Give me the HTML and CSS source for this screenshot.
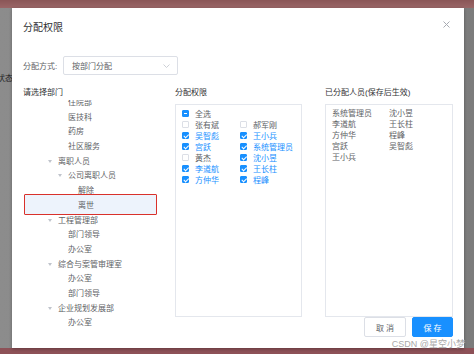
FILE: index.html
```html
<!DOCTYPE html>
<html lang="zh-CN">

<head>
    <meta charset="utf-8">
    <meta name="viewport" content="width=device-width, initial-scale=1.0">
    <title>分配权限</title>

    <link rel="stylesheet" href="styles.css">
</head>

<body>

    <div class="page">
        <div class="page-top"></div>
        <div class="page-body"><span class="page-text">状态</span></div>
        <div class="page-bottom"></div>
    </div>

    <div class="dialog">
        <div class="dialog-header">
            <span class="dialog-title">分配权限</span>
            <button class="dialog-close">
                <svg width="7" height="7" viewBox="0 0 7 7"><path d="M0.5 0.5L6.5 6.5M6.5 0.5L0.5 6.5" stroke="#a8abb2" stroke-width="1" fill="none"/></svg>
            </button>
        </div>

        <div class="form-row">
            <label>分配方式:</label>
            <div class="select">
                <span>按部门分配</span>
                <svg class="chevron" width="7" height="4" viewBox="0 0 7 4"><path d="M0.5 0.5L3.5 3.5L6.5 0.5" stroke="#c0c4cc" stroke-width="0.8" fill="none"/></svg>
            </div>
        </div>

        <div class="columns">
            <!--部门-->
            <div class="col-dept">
                <div class="col-title">请选择部门</div>
                <div class="tree">
                    <ul class="tree-list">
                        <li class="l2">住院部</li>
                        <li class="l2">医技科</li>
                        <li class="l2">药房</li>
                        <li class="l2">社区服务</li>
                        <li class="l1 open">离职人员</li>
                        <li class="l2 open">公司离职人员</li>
                        <li class="l3">解除</li>
                        <li class="l3 current">离世</li>
                        <li class="l1 open">工程管理部</li>
                        <li class="l2">部门领导</li>
                        <li class="l2">办公室</li>
                        <li class="l1 open">综合与案管审理室</li>
                        <li class="l2">办公室</li>
                        <li class="l2">部门领导</li>
                        <li class="l1 open">企业规划发展部</li>
                        <li class="l2">办公室</li>
                    </ul>
                </div>
            </div>

            <div class="col-main">
                <div class="col-pair">
                    <!--分配权限-->
                    <div class="col-box">
                        <div class="col-title">分配权限</div>
                        <div class="box">
                            <div class="check-grid">
                                <div class="check half"><span class="cb"></span>全选</div>
                                <div></div>
                                <div class="check"><span class="cb"></span>张有斌</div>
                                <div class="check"><span class="cb"></span>郝军刚</div>
                                <div class="check on"><span class="cb"></span>吴智彪</div>
                                <div class="check on"><span class="cb"></span>王小兵</div>
                                <div class="check on"><span class="cb"></span>宫跃</div>
                                <div class="check on"><span class="cb"></span>系统管理员</div>
                                <div class="check"><span class="cb"></span>黄杰</div>
                                <div class="check on"><span class="cb"></span>沈小昱</div>
                                <div class="check on"><span class="cb"></span>李道航</div>
                                <div class="check on"><span class="cb"></span>王长柱</div>
                                <div class="check on"><span class="cb"></span>方仲华</div>
                                <div class="check on"><span class="cb"></span>程峰</div>
                            </div>
                        </div>
                    </div>

                    <!--已分配-->
                    <div class="col-box">
                        <div class="col-title">已分配人员(保存后生效)</div>
                        <div class="box">
                            <div class="name-grid">
                                <div>系统管理员</div>
                                <div>沈小昱</div>
                                <div>李道航</div>
                                <div>王长柱</div>
                                <div>方仲华</div>
                                <div>程峰</div>
                                <div>宫跃</div>
                                <div>吴智彪</div>
                                <div>王小兵</div>
                            </div>
                        </div>
                    </div>
                </div>

                <div class="dialog-footer">
                    <button class="btn">取消</button>
                    <button class="btn primary">保存</button>
                </div>
            </div>
        </div>
    </div>

    <div class="watermark">CSDN @星空小梦</div>

</body>

</html>
```

FILE: styles.css
```css
body {
    margin: 0;
    padding: 0;
    width: 474px;
    height: 354px;
    overflow: hidden;
    background-color: #858585;
    font-family: "Liberation Sans", "Noto Sans CJK SC", sans-serif;
    font-size: 8px;
    color: #606266;
}

ul {
    list-style: none;
    margin: 0;
    padding: 0;
}

button {
    font-family: inherit;
    cursor: pointer;
}

/*Siden bagved*/

.page {
    display: flex;
    flex-direction: column;
    height: 354px;
}

.page-top {
    height: 8px;
    background: linear-gradient(#8a5657, #9a6667);
}

.page-body {
    height: 340px;
    background: linear-gradient(90deg, #8c8c8c, #7c7c7c);
}

.page-text {
    display: block;
    margin-top: 64px;
    margin-left: -3px;
    font-size: 8px;
    color: #1f1f1f;
}

.page-bottom {
    flex: 1;
    background-color: #8d5157;
}

/*Dialog*/

.dialog {
    position: absolute;
    left: 12px;
    top: 8px;
    width: 452px;
    height: 340px;
    box-sizing: border-box;
    padding: 0 11px;
    background-color: white;
    box-shadow: 0 1px 3px rgba(0, 0, 0, 0.3);
}

.dialog-header {
    position: relative;
    height: 38px;
    padding-top: 14px;
    box-sizing: border-box;
}

.dialog-title {
    font-size: 10px;
    line-height: 12px;
    color: #303133;
}

.dialog-close {
    position: absolute;
    right: 1px;
    top: 11px;
    width: 11px;
    height: 11px;
    padding: 0;
    border: none;
    background: none;
    display: flex;
    align-items: center;
    justify-content: center;
}

.form-row {
    display: flex;
    align-items: center;
    margin-top: 10px;
    height: 19px;
}

.form-row label {
    width: 40px;
    color: #606266;
}

.select {
    width: 115px;
    height: 19px;
    box-sizing: border-box;
    border: 1px solid #dcdfe6;
    border-radius: 2px;
    display: flex;
    align-items: center;
    justify-content: space-between;
    padding: 0 7px 0 8px;
    color: #606266;
}

.columns {
    display: flex;
    margin-top: 12px;
}

.col-title {
    line-height: 12px;
    height: 12px;
    color: #303133;
}

/*Traeet*/

.col-dept {
    width: 152px;
}

.tree {
    margin-top: 1px;
    width: 136px;
    height: 227px;
    overflow: hidden;
}

.tree-list {
    margin-top: -4px;
}

.tree-list li {
    position: relative;
    height: 14.7px;
    line-height: 14.7px;
    white-space: nowrap;
}

.tree-list .l1 {
    padding-left: 35px;
}

.tree-list .l2 {
    padding-left: 45px;
}

.tree-list .l3 {
    padding-left: 55px;
}

.tree-list .open::before {
    content: "";
    display: inline-block;
    width: 0;
    height: 0;
    border-left: 2px solid transparent;
    border-right: 2px solid transparent;
    border-top: 3px solid #c0c4cc;
    margin-left: -10px;
    margin-right: 6px;
    vertical-align: 1px;
}

.tree-list .current {
    z-index: 0;
}

.tree-list .current::after {
    content: "";
    position: absolute;
    left: 1px;
    top: -5px;
    width: 133px;
    height: 21px;
    box-sizing: border-box;
    border: 1.5px solid #d9312b;
    border-radius: 1px;
    background-color: #edf3fc;
    z-index: -1;
}

/*Hoejre side*/

.col-main {
    width: 278px;
}

.col-pair {
    display: flex;
    gap: 23px;
}

.col-box {
    width: 127px;
}

.col-box + .col-box {
    width: 128px;
}

.box {
    margin-top: 5px;
    height: 213px;
    box-sizing: border-box;
    border: 1px solid #e4e7ed;
    padding: 3px 6px;
}

.check-grid {
    display: grid;
    grid-template-columns: 58px 1fr;
}

.check {
    display: flex;
    align-items: center;
    height: 11px;
    white-space: nowrap;
    color: #606266;
}

.check.on {
    color: #1890ff;
}

.cb {
    position: relative;
    width: 7px;
    height: 7px;
    box-sizing: border-box;
    border: 1px solid #dcdfe6;
    border-radius: 1px;
    background-color: white;
    margin-right: 6px;
}

.check.on .cb,
.check.half .cb {
    background-color: #1890ff;
    border-color: #1890ff;
}

.check.on .cb::after {
    content: "";
    position: absolute;
    left: 1.5px;
    top: -0.5px;
    width: 1.5px;
    height: 3.5px;
    border: solid white;
    border-width: 0 1px 1px 0;
    transform: rotate(45deg);
}

.check.half .cb::after {
    content: "";
    position: absolute;
    left: 1px;
    top: 2px;
    width: 3px;
    height: 1px;
    background-color: white;
}

.name-grid {
    display: grid;
    grid-template-columns: 57px 1fr;
}

.name-grid div {
    height: 11px;
    line-height: 11px;
    white-space: nowrap;
}

.dialog-footer {
    display: flex;
    justify-content: flex-end;
    gap: 6px;
}

.btn {
    width: 42px;
    height: 20px;
    padding: 0;
    border: 1px solid #dcdfe6;
    border-radius: 2px;
    background-color: white;
    color: #606266;
    font-size: 8px;
    letter-spacing: 2px;
    text-indent: 2px;
}

.btn.primary {
    width: 41px;
    background-color: #1890ff;
    border-color: #1890ff;
    color: white;
}

.watermark {
    position: absolute;
    right: 9px;
    top: 338px;
    font-size: 9px;
    line-height: 12px;
    color: #a9a9a9;
    text-shadow: 0 0 1px white;
}
```
